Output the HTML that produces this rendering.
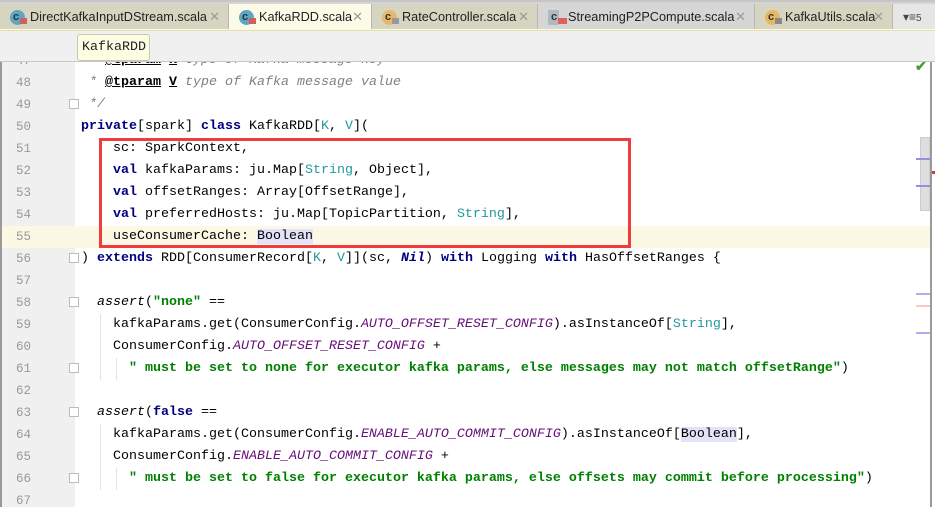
<!DOCTYPE html>
<html><head><meta charset="utf-8">
<style>
*{margin:0;padding:0;box-sizing:border-box}
body{width:935px;height:507px;overflow:hidden;background:#fff;position:relative;font-family:"Liberation Sans",sans-serif}
.tabs{position:absolute;left:0;top:0;width:935px;height:30px;background:#d4d4d4;border-top:2px solid #c6c6c6;border-bottom:1px solid #b0b0b0}
.tab{position:absolute;top:2px;height:27px;font-size:12.7px;color:#222;line-height:26px;border-right:1px solid #b8b8b8;overflow:hidden}
.tab .ic{position:absolute;left:10px;top:6px;width:15px;height:15px;border-radius:50%;background:#5ea6c4}
.tab .ic::after{content:"c";position:absolute;left:3px;top:-6px;font-size:11px;color:#333;font-weight:bold}
.tab .lk{position:absolute;left:20px;top:14px;width:7px;height:6px;background:#d06060}
.tab .x{position:absolute;right:8px;top:0;color:#9a9a9a;font-size:13px}
.tab .t{position:absolute;left:30px;top:0;white-space:nowrap}
.bar{position:absolute;left:0;top:29px;width:935px;height:2px;background:#fdfbdc;border-bottom:1px solid #e2e0b0}
.crumb{position:absolute;left:0;top:31px;width:935px;height:31px;background:#f0f0f0;border-bottom:1px solid #c8c8c8;z-index:5}
.tip{position:absolute;left:77px;top:3px;width:73px;height:27px;background:#fdfde4;border:1px solid #c8c8b0;border-radius:3px;font-family:"Liberation Mono",monospace;font-size:13.33px;line-height:25px;padding-left:4px;color:#222}
.gutter{position:absolute;left:0;top:31px;width:75px;height:476px;background:#f0f0f0;border-left:2px solid #9a9a9a}
.hl{position:absolute;left:75px;top:226px;width:855px;height:22px;background:#fdf8e4}
.hl2{position:absolute;left:2px;top:226px;width:73px;height:22px;background:#fdf8e4}
.ln{position:absolute;left:0;width:31px;text-align:right;font-family:"Liberation Mono",monospace;font-size:12.5px;color:#999;line-height:22px}
.code{position:absolute;left:81px;font-family:"Liberation Mono",monospace;font-size:13.33px;line-height:22px;white-space:pre;color:#000}
.k{color:#000080;font-weight:bold}
.tp{color:#20999d}
.s{color:#008000;font-weight:bold}
.i{color:#660e7a;font-style:italic}
.c{color:#808080;font-style:italic}
.it{font-style:italic}
.dt{font-weight:bold;text-decoration:underline;color:#000;font-style:normal}
.bo{background:#e2e2f8}
.box{position:absolute;left:99px;top:138px;width:532px;height:110px;border:3px solid #f03c3c}
.fold{position:absolute;left:69px;width:10px;height:10px;border:1px solid #bbb;background:#fff}
.guide{position:absolute;width:1px;background:#e2e2e2}
.sb{position:absolute;left:930px;top:62px;width:2px;height:445px;background:#9a9a9a}
.mk{position:absolute;left:916px;width:14px;height:2px}
</style></head><body>
<div class="tabs">
 <div class="tab" style="left:0;width:229px;background:#d5d5c1"><span class="ic"></span><span class="lk"></span><span class="t">DirectKafkaInputDStream.scala</span><span class="x">✕</span></div>
 <div class="tab" style="left:229px;width:143px;background:#fbfbe7;height:28px"><span class="ic"></span><span class="lk"></span><span class="t">KafkaRDD.scala</span><span class="x">✕</span></div>
 <div class="tab" style="left:372px;width:166px;background:#d5d5c1"><span class="ic" style="background:#e6b86a"></span><span class="lk" style="background:#999"></span><span class="t">RateController.scala</span><span class="x">✕</span></div>
 <div class="tab" style="left:538px;width:217px;background:#d6d6d6"><span class="ic" style="background:#b0b8c0;border-radius:0;width:11px"></span><span class="lk" style="background:#e06060;width:9px"></span><span class="t">StreamingP2PCompute.scala</span><span class="x">✕</span></div>
 <div class="tab" style="left:755px;width:138px;background:#d5d5c1"><span class="ic" style="background:#e8b860"></span><span class="lk" style="background:#888"></span><span class="t">KafkaUtils.scala</span><span class="x">✕</span></div>
 <div class="tab" style="left:893px;width:42px;background:#e6e6e6;border:none"><span style="position:absolute;left:10px;top:0;font-size:12px;color:#444">▾≡<span style="font-size:10px">5</span></span></div>
</div>
<div class="bar"></div>
<div class="gutter"></div>
<div class="hl"></div><div class="hl2"></div>
<div class="ln" style="top:50px">47</div>
<div class="ln" style="top:72px">48</div>
<div class="ln" style="top:94px">49</div>
<div class="ln" style="top:116px">50</div>
<div class="ln" style="top:138px">51</div>
<div class="ln" style="top:160px">52</div>
<div class="ln" style="top:182px">53</div>
<div class="ln" style="top:204px">54</div>
<div class="ln" style="top:226px">55</div>
<div class="ln" style="top:248px">56</div>
<div class="ln" style="top:270px">57</div>
<div class="ln" style="top:292px">58</div>
<div class="ln" style="top:314px">59</div>
<div class="ln" style="top:336px">60</div>
<div class="ln" style="top:358px">61</div>
<div class="ln" style="top:380px">62</div>
<div class="ln" style="top:402px">63</div>
<div class="ln" style="top:424px">64</div>
<div class="ln" style="top:446px">65</div>
<div class="ln" style="top:468px">66</div>
<div class="ln" style="top:490px">67</div>
<div class="fold" style="top:99px"></div>
<div class="fold" style="top:253px"></div>
<div class="fold" style="top:297px"></div>
<div class="fold" style="top:363px"></div>
<div class="fold" style="top:407px"></div>
<div class="fold" style="top:473px"></div>
<div class="guide" style="left:100px;top:314px;height:66px"></div>
<div class="guide" style="left:116px;top:358px;height:22px"></div>
<div class="guide" style="left:100px;top:424px;height:66px"></div>
<div class="guide" style="left:116px;top:468px;height:22px"></div>
<div class="code" style="top:50px"><span class="c">   <span class="dt">@tparam</span> <span class="dt">K</span> type of Kafka message key</span></div>
<div class="code" style="top:72px"><span class="c"> * <span class="dt">@tparam</span> <span class="dt">V</span> type of Kafka message value</span></div>
<div class="code" style="top:94px"><span class="c"> */</span></div>
<div class="code" style="top:116px"><span class="k">private</span>[spark] <span class="k">class</span> KafkaRDD[<span class="tp">K</span>, <span class="tp">V</span>](</div>
<div class="code" style="top:138px">    sc: SparkContext,</div>
<div class="code" style="top:160px">    <span class="k">val</span> kafkaParams: ju.Map[<span class="tp">String</span>, Object],</div>
<div class="code" style="top:182px">    <span class="k">val</span> offsetRanges: Array[OffsetRange],</div>
<div class="code" style="top:204px">    <span class="k">val</span> preferredHosts: ju.Map[TopicPartition, <span class="tp">String</span>],</div>
<div class="code" style="top:226px">    useConsumerCache: <span class="bo">Boolean</span></div>
<div class="code" style="top:248px">) <span class="k">extends</span> RDD[ConsumerRecord[<span class="tp">K</span>, <span class="tp">V</span>]](sc, <span class="k it">Nil</span>) <span class="k">with</span> Logging <span class="k">with</span> HasOffsetRanges {</div>
<div class="code" style="top:292px">  <span class="it">assert</span>(<span class="s">"none"</span> ==</div>
<div class="code" style="top:314px">    kafkaParams.get(ConsumerConfig.<span class="i">AUTO_OFFSET_RESET_CONFIG</span>).asInstanceOf[<span class="tp">String</span>],</div>
<div class="code" style="top:336px">    ConsumerConfig.<span class="i">AUTO_OFFSET_RESET_CONFIG</span> +</div>
<div class="code" style="top:358px">      <span class="s">" must be set to none for executor kafka params, else messages may not match offsetRange"</span>)</div>
<div class="code" style="top:402px">  <span class="it">assert</span>(<span class="k">false</span> ==</div>
<div class="code" style="top:424px">    kafkaParams.get(ConsumerConfig.<span class="i">ENABLE_AUTO_COMMIT_CONFIG</span>).asInstanceOf[<span class="bo">Boolean</span>],</div>
<div class="code" style="top:446px">    ConsumerConfig.<span class="i">ENABLE_AUTO_COMMIT_CONFIG</span> +</div>
<div class="code" style="top:468px">      <span class="s">" must be set to false for executor kafka params, else offsets may commit before processing"</span>)</div>
<div class="box"></div>
<div class="crumb"><div class="tip">KafkaRDD</div></div>
<div class="sb"></div>
<div style="position:absolute;left:920px;top:137px;width:10px;height:74px;background:#dedede;border:1px solid #ccc"></div>
<div class="mk" style="top:158px;background:#9a8ae0"></div>
<div class="mk" style="top:185px;background:#9a8ae0"></div>
<div class="mk" style="top:293px;background:#b8a8f0"></div>
<div class="mk" style="top:305px;background:#f8c8c8"></div>
<div class="mk" style="top:332px;background:#b8a8f0"></div>
<div style="position:absolute;left:932px;top:171px;width:3px;height:3px;background:#c04040"></div>
<div style="position:absolute;left:915px;top:58px;color:#4a9a3a;font-size:14px;font-weight:bold;z-index:6">✔</div>
</body></html>
